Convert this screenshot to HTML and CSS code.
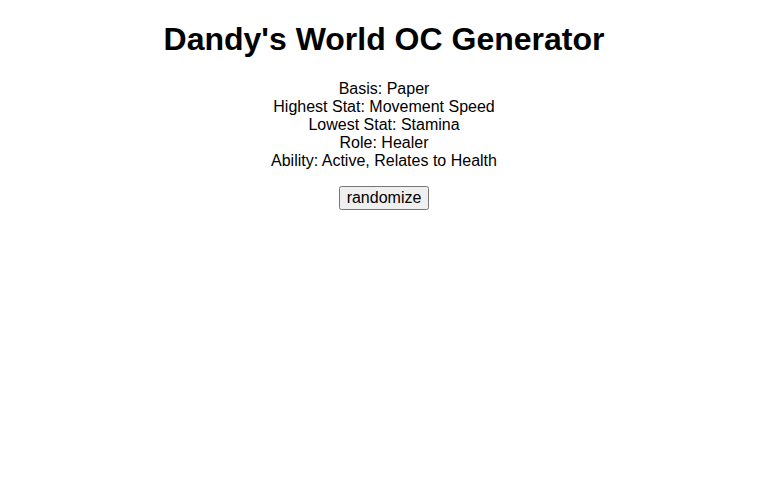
FILE: index.html
```html
<!DOCTYPE html>
<html lang="en">
<head>
    <meta charset="UTF-8">
    <meta name="viewport" content="width=device-width, initial-scale=1.0">
    <title>Dandy's World OC Generator</title>
    <link rel="stylesheet" href="styles.css">
</head>
<body>
    <h1>Dandy's World OC Generator</h1>
    <div id="result" class="result">
        <div>Basis: Paper</div>
        <div>Highest Stat: Movement Speed</div>
        <div>Lowest Stat: Stamina</div>
        <div>Role: Healer</div>
        <div>Ability: Active, Relates to Health</div>
    </div>
    <button id="randomBtn" class="random-button">randomize</button>
</body>
</html>
```

FILE: styles.css
```css
body {
    font-family: "Liberation Sans", Arial, sans-serif;
    text-align: center;
    margin: 0;
    padding: 0 8px;
    color: #000;
    background: #fff;
}

h1 {
    font-size: 32px;
    margin: 21px 0 22px;
}

.result {
    font-size: 16px;
    line-height: 18px;
    margin-bottom: 16px;
}

.random-button {
    font-family: "Liberation Sans", Arial, sans-serif;
    font-size: 16px;
}
```
